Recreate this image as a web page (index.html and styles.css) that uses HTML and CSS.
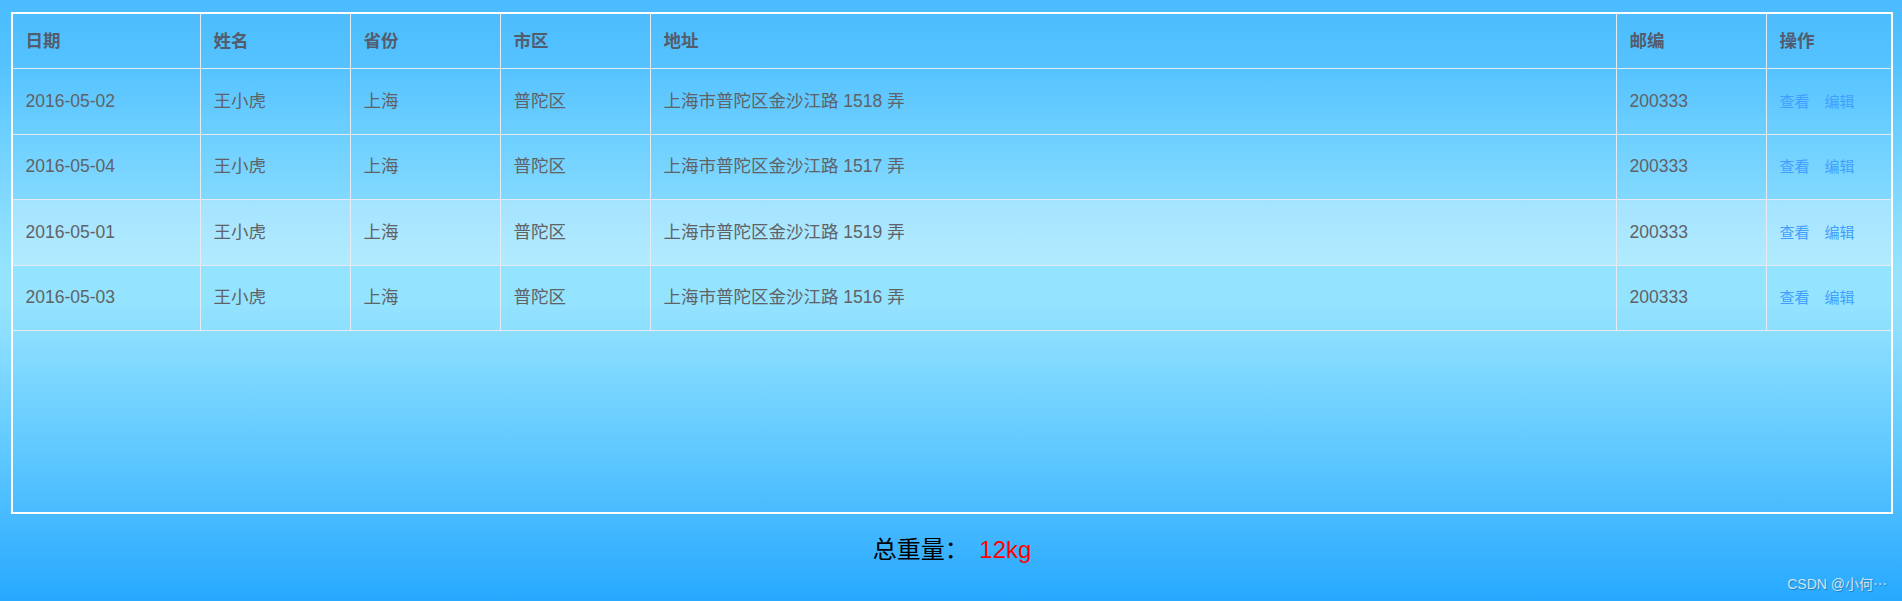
FILE: index.html
```html
<!DOCTYPE html>
<html lang="zh-CN">
<head>
<meta charset="utf-8">
<title>表格</title>
<link rel="stylesheet" href="styles.css">
</head>
<body>
<div class="page">
  <div class="table-wrap">
    <table class="data-table">
      <colgroup>
        <col class="c-date">
        <col class="c-name">
        <col class="c-prov">
        <col class="c-city">
        <col class="c-addr">
        <col class="c-zip">
        <col class="c-ops">
      </colgroup>
      <thead>
        <tr>
          <th>日期</th>
          <th>姓名</th>
          <th>省份</th>
          <th>市区</th>
          <th>地址</th>
          <th>邮编</th>
          <th class="last">操作</th>
        </tr>
      </thead>
      <tbody>
        <tr>
          <td>2016-05-02</td>
          <td>王小虎</td>
          <td>上海</td>
          <td>普陀区</td>
          <td>上海市普陀区金沙江路 1518 弄</td>
          <td>200333</td>
          <td class="last"><span class="link">查看</span><span class="link">编辑</span></td>
        </tr>
        <tr>
          <td>2016-05-04</td>
          <td>王小虎</td>
          <td>上海</td>
          <td>普陀区</td>
          <td>上海市普陀区金沙江路 1517 弄</td>
          <td>200333</td>
          <td class="last"><span class="link">查看</span><span class="link">编辑</span></td>
        </tr>
        <tr class="hover">
          <td>2016-05-01</td>
          <td>王小虎</td>
          <td>上海</td>
          <td>普陀区</td>
          <td>上海市普陀区金沙江路 1519 弄</td>
          <td>200333</td>
          <td class="last"><span class="link">查看</span><span class="link">编辑</span></td>
        </tr>
        <tr>
          <td>2016-05-03</td>
          <td>王小虎</td>
          <td>上海</td>
          <td>普陀区</td>
          <td>上海市普陀区金沙江路 1516 弄</td>
          <td>200333</td>
          <td class="last"><span class="link">查看</span><span class="link">编辑</span></td>
        </tr>
      </tbody>
    </table>
  </div>
  <div class="total">总重量： <span class="total-value">12kg</span></div>
</div>
<div class="watermark">CSDN @小何⋯</div>
</body>
</html>
```

FILE: styles.css
```css
html, body {
  margin: 0;
  padding: 0;
}

body {
  width: 1902px;
  height: 601px;
  overflow: hidden;
  position: relative;
  font-family: "Liberation Sans", Arial, "Noto Sans CJK SC", sans-serif;
  background: linear-gradient(to bottom,
    #4abbfd 0px,
    #56c3ff 68px,
    #6ccfff 133px,
    #82d9ff 199px,
    #93e3ff 264px,
    #95e4ff 300px,
    #8ddfff 330px,
    #6bcfff 420px,
    #49bbff 512px,
    #27a9ff 601px);
}

.page {
  padding: 12px 9px 0 11px;
}

.table-wrap {
  height: 498px;
  border: 2px solid #ffffff;
}

.data-table {
  width: 1878px;
  table-layout: fixed;
  border-collapse: separate;
  border-spacing: 0;
}

.c-date { width: 188px; }
.c-name { width: 150px; }
.c-prov { width: 150px; }
.c-city { width: 150px; }
.c-addr { width: 966px; }
.c-zip  { width: 150px; }
.c-ops  { width: 124px; }

.data-table th,
.data-table td {
  padding: 0 0 0 12.5px;
  text-align: left;
  vertical-align: middle;
  line-height: 23px;
  border-right: 1px solid #e6ebf2;
  border-bottom: 1px solid #e6ebf2;
  white-space: nowrap;
  overflow: hidden;
}

.data-table th.last,
.data-table td.last {
  border-right: none;
}

.data-table th {
  height: 54px;
  font-size: 17.5px;
  font-weight: bold;
  color: #535c6c;
}

.data-table td {
  height: 64.5px;
  font-size: 17.5px;
  color: #606266;
}

.data-table tr.hover td {
  background: rgba(255, 255, 255, 0.28);
}

.link {
  font-size: 15px;
  color: #409eff;
}

.link + .link {
  margin-left: 15px;
}

.total {
  margin-top: 21px;
  line-height: 30px;
  text-align: center;
  font-size: 24px;
  color: #000000;
}

.total-value {
  color: #ff0000;
  margin-left: 4px;
}

.watermark {
  position: absolute;
  right: 15px;
  bottom: 8px;
  font-size: 14px;
  color: #d3e3f0;
  text-shadow: 1px 1px 1px rgba(0, 40, 80, 0.35);
}
```
